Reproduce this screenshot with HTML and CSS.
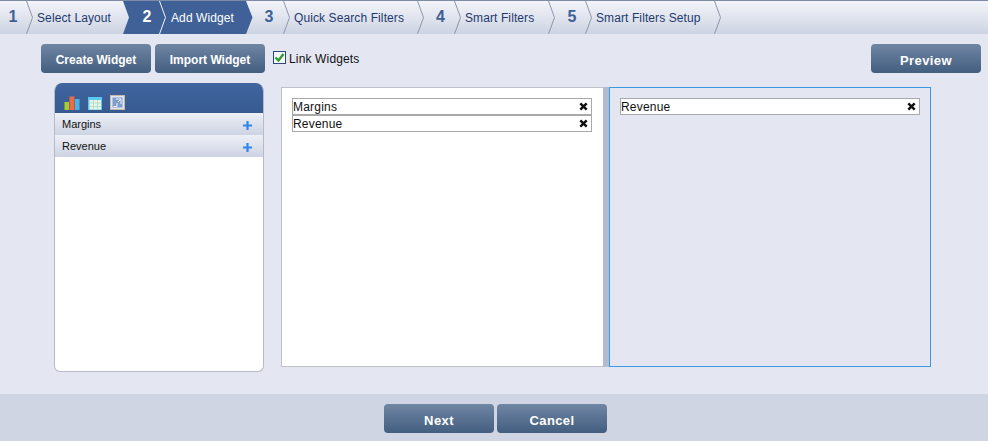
FILE: index.html
```html
<!DOCTYPE html>
<html lang="en">
<head>
<meta charset="utf-8">
<title>Add Widget</title>
<link rel="stylesheet" href="styles.css">
</head>
<body>
<div class="page">
  <nav class="stepper">
    <span class="num n1">1</span>
    <svg class="chev" width="8" height="33" viewBox="0 0 8 33"><path d="M0.5 0L6.5 16.5L0.5 33" /></svg>
    <span class="label l1">Select Layout</span>
    <div class="active">
      <svg class="active-bg" width="130" height="33" viewBox="0 0 130 33"><path d="M0 0H123L129.5 16.5L123 33H0L6 16.5Z"/></svg>
      <span class="num n2">2</span>
      <svg class="chev" width="8" height="33" viewBox="0 0 8 33"><path d="M0.5 0L6.5 16.5L0.5 33" /></svg>
      <span class="label l2">Add Widget</span>
    </div>
    <span class="num n3">3</span>
    <svg class="chev" width="8" height="33" viewBox="0 0 8 33"><path d="M0.5 0L6.5 16.5L0.5 33" /></svg>
    <span class="label l3">Quick Search Filters</span>
    <svg class="chev" width="8" height="33" viewBox="0 0 8 33"><path d="M0.5 33L6.5 16.5L0.5 0" /></svg>
    <span class="num n4">4</span>
    <svg class="chev" width="8" height="33" viewBox="0 0 8 33"><path d="M0.5 0L6.5 16.5L0.5 33" /></svg>
    <span class="label l4">Smart Filters</span>
    <svg class="chev" width="8" height="33" viewBox="0 0 8 33"><path d="M0.5 33L6.5 16.5L0.5 0" /></svg>
    <span class="num n5">5</span>
    <svg class="chev" width="8" height="33" viewBox="0 0 8 33"><path d="M0.5 0L6.5 16.5L0.5 33" /></svg>
    <span class="label l5">Smart Filters Setup</span>
    <svg class="chev" width="8" height="33" viewBox="0 0 8 33"><path d="M0.5 33L6.5 16.5L0.5 0" /></svg>
  </nav>

  <div class="toolbar">
    <button class="btn">Create Widget</button>
    <button class="btn">Import Widget</button>
    <label class="link">
      <span class="check"><svg width="11" height="11" viewBox="0 0 11 11"><path d="M1.5 5.5L4.5 8.5L9.5 2" fill="none" stroke="#2f9e2f" stroke-width="2.4"/></svg></span>
      Link Widgets
    </label>
    <button class="btn preview">Preview</button>
  </div>

  <main class="content">
    <aside class="library">
      <div class="library-head">
        <svg width="16" height="14" viewBox="0 0 16 14"><rect x="0.5" y="6" width="4.5" height="8" fill="#a6cf2e"/><rect x="5.5" y="0.5" width="5" height="13.5" fill="#ee6a45"/><rect x="11" y="3" width="4.5" height="11" fill="#45b4e4"/></svg>
        <svg width="14" height="13" viewBox="0 0 14 13"><rect width="14" height="13" fill="#5cc8f2"/><rect x="1.5" y="3" width="11.5" height="9.5" fill="#eaf5e2"/><path d="M5.5 3V13M9.5 3V13M1.5 6H13M1.5 9.5H13" stroke="#b4dccf"/></svg>
        <svg width="15" height="15" viewBox="0 0 15 15"><rect x="0.5" y="0.5" width="14" height="14" fill="#dfe6f2" stroke="#c9b9a4"/><rect x="2.5" y="2.5" width="10" height="10" fill="#7f9ecb"/><path d="M6 4H11V9M11 4L8 7M3.5 11.5H7V8" fill="none" stroke="#eef3fa"/></svg>
      </div>
      <div class="lib-row"><span>Margins</span><svg width="9" height="9" viewBox="0 0 9 9"><path d="M4.5 0V9M0 4.5H9" stroke="#2f86ee" stroke-width="2.2"/></svg></div>
      <div class="lib-row"><span>Revenue</span><svg width="9" height="9" viewBox="0 0 9 9"><path d="M4.5 0V9M0 4.5H9" stroke="#2f86ee" stroke-width="2.2"/></svg></div>
    </aside>

    <section class="canvas">
      <div class="pane left">
        <div class="item"><span>Margins</span><svg class="x" width="9" height="9" viewBox="0 0 9 9"><path d="M1.3 1.3L7.7 7.7M7.7 1.3L1.3 7.7" stroke="#111" stroke-width="2.4"/></svg></div>
        <div class="item"><span>Revenue</span><svg class="x" width="9" height="9" viewBox="0 0 9 9"><path d="M1.3 1.3L7.7 7.7M7.7 1.3L1.3 7.7" stroke="#111" stroke-width="2.4"/></svg></div>
      </div>
      <div class="splitter"></div>
      <div class="pane right">
        <div class="item"><span>Revenue</span><svg class="x" width="9" height="9" viewBox="0 0 9 9"><path d="M1.3 1.3L7.7 7.7M7.7 1.3L1.3 7.7" stroke="#111" stroke-width="2.4"/></svg></div>
      </div>
    </section>
  </main>

  <footer class="footer">
    <button class="btn">Next</button>
    <button class="btn">Cancel</button>
  </footer>
</div>
</body>
</html>
```

FILE: styles.css
```css
* { box-sizing: border-box; }
html, body { margin: 0; padding: 0; }
body {
  font-family: "Liberation Sans", Arial, sans-serif;
  font-size: 12px;
  background: #e4e7f1;
  color: #111;
  overflow: hidden;
}
.page {
  width: 988px;
  height: 441px;
  display: flex;
  flex-direction: column;
}
.stepper {
  height: 34px;
  flex: none;
  display: flex;
  border-top: 1px solid #7e8ba6;
  background: linear-gradient(#f2f4f9 0%, #e6e9f1 35%, #ccd3e2 100%);
}
.num {
  font-size: 16px;
  font-weight: bold;
  color: #3f6096;
  text-align: center;
  line-height: 31px;
  flex: none;
}
.chev { flex: none; }
.chev path { fill: none; stroke: #8c96aa; stroke-width: 1; }
.label {
  flex: none;
  padding-left: 3px;
  line-height: 35px;
  color: #1f3a6e;
  letter-spacing: 0.1px;
  white-space: nowrap;
}
.n1 { width: 26px; }
.l1 { width: 89px; }
.active {
  position: relative;
  flex: none;
  width: 130px;
  display: flex;
}
.active-bg { position: absolute; left: 0; top: 0; }
.active-bg path { fill: #3f6198; }
.active .num, .active .chev, .active .label { position: relative; }
.active .num { color: #fff; }
.active .chev path { stroke: #f2f4f9; }
.active .label { color: #fff; padding-left: 4px; }
.n2 { width: 36px; padding-left: 12px; }
.l2 { width: 86px; }
.n3 { width: 30px; padding-left: 2px; }
.l3 { width: 126px; }
.n4 { width: 29px; padding-left: 2px; }
.l4 { width: 86px; }
.n5 { width: 29px; padding-left: 3px; }
.l5 { width: 121px; }

.toolbar {
  flex: none;
  display: flex;
  align-items: center;
  height: 29px;
  margin-top: 10px;
  padding: 0 7px 0 41px;
  gap: 4px;
}
.btn {
  width: 110px;
  height: 29px;
  padding: 2px 0 0;
  border: 0;
  border-radius: 4px;
  background: linear-gradient(#6f86a3, #445e80);
  color: #fff;
  font: bold 12px "Liberation Sans", Arial, sans-serif;
}
.preview {
  margin-left: auto;
  font-size: 13px;
  letter-spacing: 0.4px;
  padding-top: 3px;
}
.link {
  display: flex;
  align-items: center;
  gap: 3px;
  margin-left: 4px;
  color: #111;
  letter-spacing: 0.15px;
  padding-top: 1px;
}
.check {
  width: 13px;
  height: 13px;
  border: 1px solid #2d4a7c;
  background: #f6f7fa;
  display: flex;
  align-items: center;
  justify-content: center;
  margin-top: -3px;
}
.content {
  flex: none;
  height: 289px;
  margin-top: 10px;
  padding-left: 54px;
  display: flex;
  align-items: flex-start;
}
.library {
  width: 210px;
  height: 289px;
  background: #fff;
  border: 1px solid #b7bbc9;
  border-top: 0;
  border-radius: 8px 8px 6px 6px;
  overflow: hidden;
}
.library-head {
  height: 30px;
  margin: 0 -1px;
  background: linear-gradient(#40659f, #365a90);
  display: flex;
  align-items: flex-end;
  gap: 8px;
  padding: 0 0 3px 10px;
}
.lib-row {
  height: 22px;
  display: flex;
  justify-content: space-between;
  align-items: center;
  padding: 0 11px 0 7px;
  background: linear-gradient(#eef0f6, #cdd3e2);
  font-size: 11px;
  color: #111;
}
.lib-row span { margin-top: -1px; }
.lib-row svg { margin-top: 3px; }
.canvas {
  margin-left: 17px;
  margin-top: 4px;
  display: flex;
  height: 280px;
}
.pane { height: 280px; padding-top: 10px; }
.left {
  width: 322px;
  background: #fff;
  border: 1px solid #bfc1c9;
  border-right: 0;
  padding-left: 10px;
}
.splitter { width: 6px; background: #b0bccf; }
.right {
  width: 322px;
  border: 1px solid #3b98e3;
  padding-left: 10px;
}
.item {
  width: 300px;
  height: 17px;
  background: #fff;
  border: 1px solid #a9a9a9;
  display: flex;
  justify-content: space-between;
  align-items: center;
  padding: 0 3px 0 0;
  color: #111;
}
.item span { letter-spacing: 0.2px; }
.footer {
  margin-top: 22px;
  flex: 1;
  background: #d0d5e4;
  display: flex;
  justify-content: center;
  gap: 3px;
  padding: 10px 0 0 3px;
}
.footer .btn { font-size: 13px; letter-spacing: 0.4px; height: 29px; padding-top: 3px; }
```
